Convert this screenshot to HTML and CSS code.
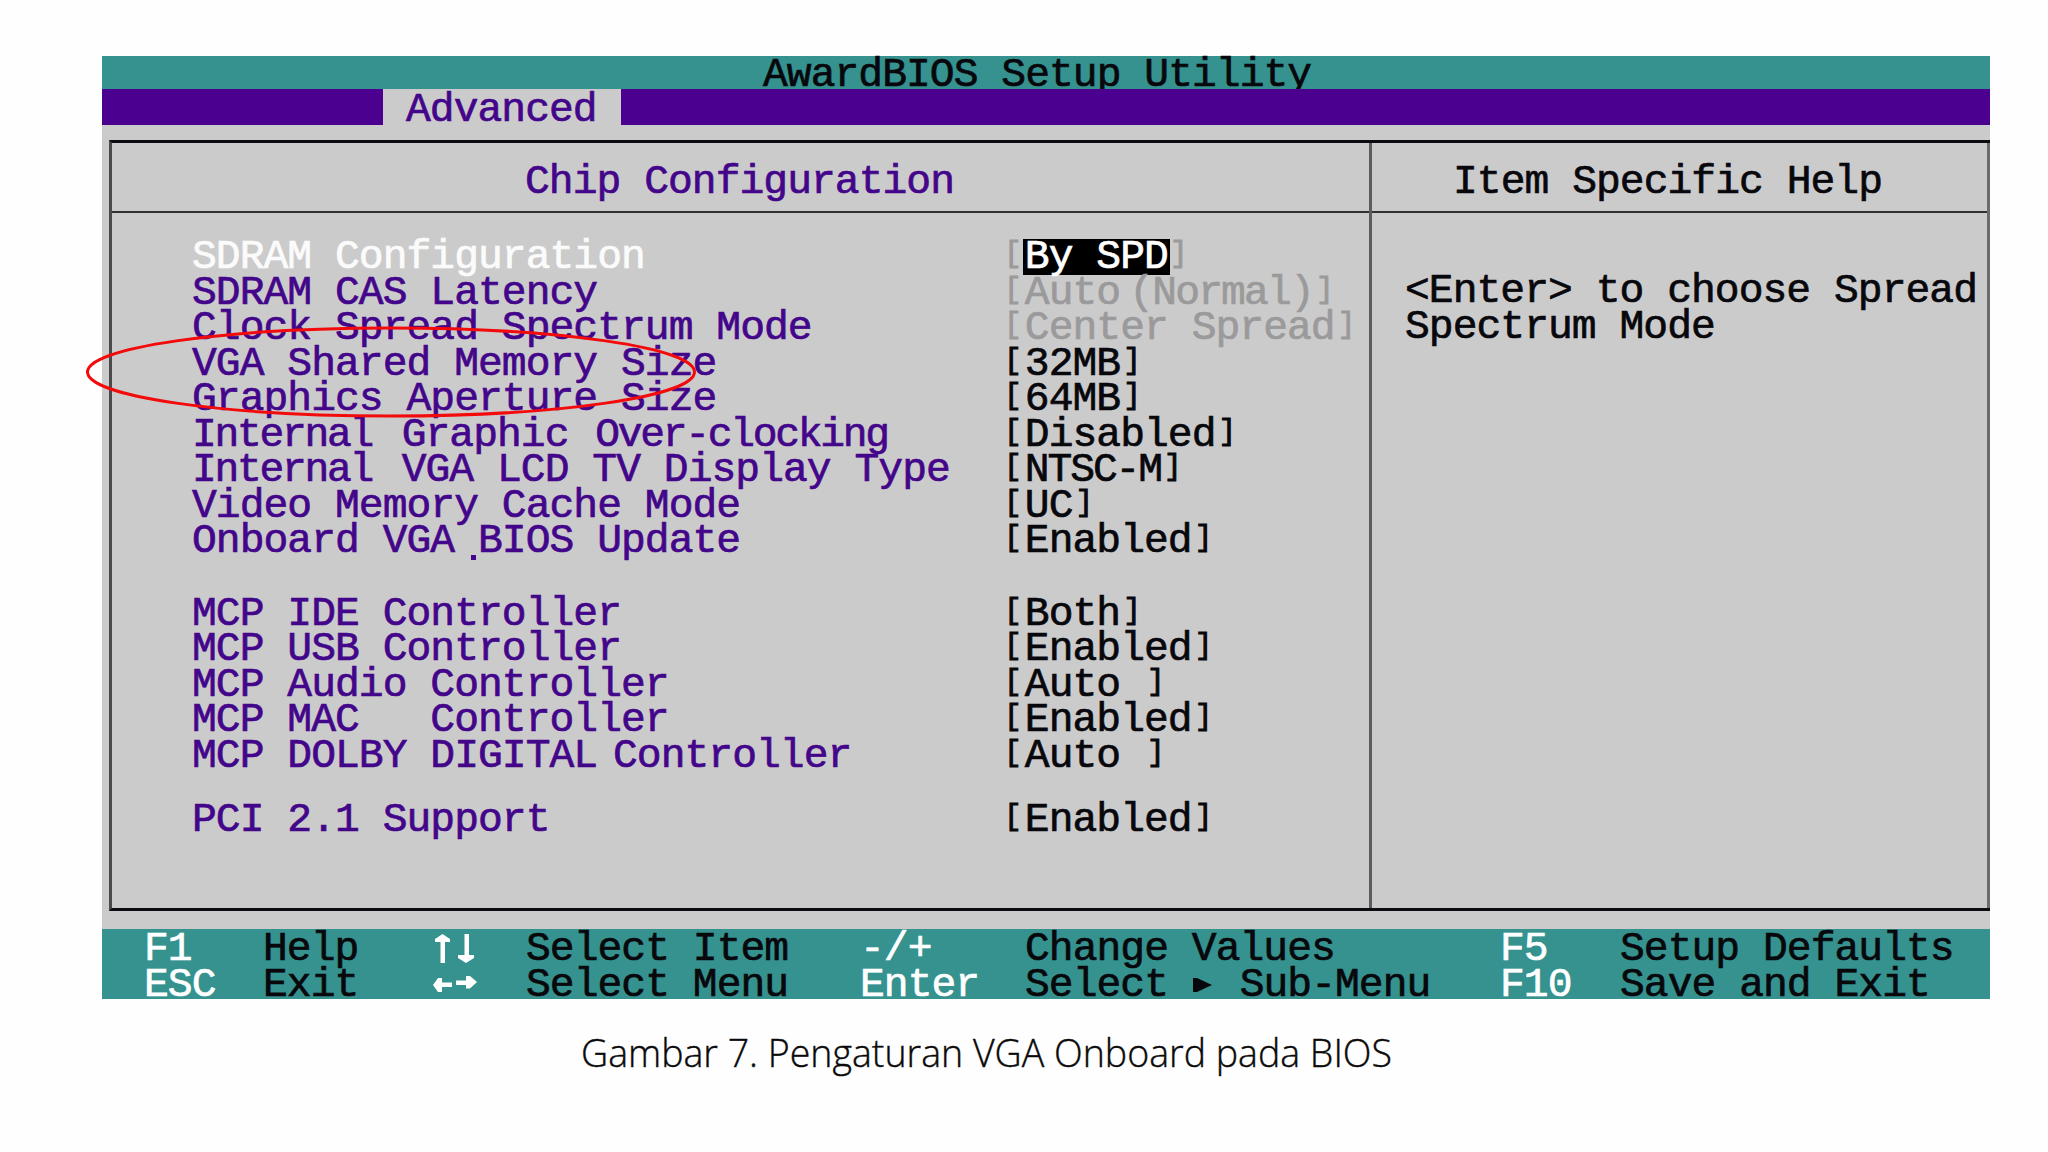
FILE: index.html
```html
<!DOCTYPE html>
<html lang="id">
<head>
<meta charset="utf-8">
<title>AwardBIOS Setup Utility</title>
<link rel="stylesheet" href="styles.css">
</head>
<body>
<figure class="slide">
  <main class="screen">
    <header class="title">AwardBIOS Setup Utility</header>
    <nav class="menu"><span class="tab">Advanced</span></nav>
    <div class="frame">
      <section class="pane options">
        <h1 class="heading">Chip Configuration</h1>
        <div class="group">
          <div class="row selected"><span>SDRAM Configuration</span><span class="dim"><i class="br">[</i><b class="cursor">By SPD</b><i class="br">]</i></span></div>
          <div class="row"><span>SDRAM CAS Latency</span><span class="dim"><i class="br">[</i>Auto<i class="normal">(Normal)</i><i class="br">]</i></span></div>
          <div class="row"><span>Clock Spread Spectrum Mode</span><span class="dim"><i class="br">[</i>Center Spread<i class="br">]</i></span></div>
          <div class="row"><span>VGA Shared Memory Size</span><span class="value"><i class="br">[</i>32MB<i class="br">]</i></span></div>
          <div class="row"><span>Graphics Aperture Size</span><span class="value"><i class="br">[</i>64MB<i class="br">]</i></span></div>
          <div class="row"><span><i class="internal">Internal</i> Graphic <i class="over">Over-clocking</i></span><span class="value"><i class="br">[</i>Disabled<i class="br">]</i></span></div>
          <div class="row"><span><i class="internal">Internal</i> VGA LCD TV Display Type</span><span class="value"><i class="br">[</i><i class="ntsc">NTSC-M</i><i class="br">]</i></span></div>
          <div class="row"><span>Video Memory Cache Mode</span><span class="value"><i class="br">[</i>UC<i class="br">]</i></span></div>
          <div class="row"><span>Onboard VGA <i class="speck"></i>BIOS Update</span><span class="value"><i class="br">[</i>Enabled<i class="br">]</i></span></div>
        </div>
        <div class="group mcp">
          <div class="row"><span>MCP IDE Controller</span><span class="value"><i class="br">[</i>Both<i class="br">]</i></span></div>
          <div class="row"><span>MCP USB Controller</span><span class="value"><i class="br">[</i>Enabled<i class="br">]</i></span></div>
          <div class="row"><span>MCP Audio Controller</span><span class="value"><i class="br">[</i>Auto <i class="br">]</i></span></div>
          <div class="row"><span>MCP MAC   Controller</span><span class="value"><i class="br">[</i>Enabled<i class="br">]</i></span></div>
          <div class="row"><span>MCP DOLBY DIGITAL<i class="near"> Controller</i></span><span class="value"><i class="br">[</i>Auto <i class="br">]</i></span></div>
        </div>
        <div class="group pci">
          <div class="row"><span>PCI 2.1 Support</span><span class="value"><i class="br">[</i>Enabled<i class="br">]</i></span></div>
        </div>
      </section>
      <aside class="pane help">
        <h2 class="heading">Item Specific Help</h2>
        <p class="tip">&lt;Enter&gt; to choose Spread
Spectrum Mode</p>
      </aside>
    </div>
    <footer class="keys">
      <span class="key">F1</span><span>Help</span>
      <svg class="arrows" viewBox="0 0 42 34"><path d="M5.500 31V10H0V7L7.500 2L15 7V10H10V31ZM29.500 2H34V23H39V26L31 31L23 26V23H29.500Z"/></svg>
      <span>Select Item</span><span class="key">-/+</span><span>Change Values</span><span class="key">F5</span><span>Setup Defaults</span>
      <span class="key">ESC</span><span>Exit</span>
      <svg class="arrows" viewBox="0 0 42 34"><path d="M-2 17L3 10H7V14.500H17V19H7V24H3ZM21 12.500H31V8H35L42 14L35 20.500H31V17H21Z"/></svg>
      <span>Select Menu</span><span class="key">Enter</span><span>Select <svg class="play" viewBox="0 0 24 24"><path d="M1 4H5L20 11L5 18H1Z"/></svg> Sub-Menu</span><span class="key">F10</span><span>Save and Exit</span>
    </footer>
    <svg class="mark" viewBox="0 0 612 92"><ellipse cx="306" cy="46" rx="303.500" ry="44"/></svg>
  </main>
  <figcaption class="caption"><span>Gambar 7. Pengaturan VGA Onboard pada BIOS</span></figcaption>
</figure>
</body>
</html>
```
FILE: styles.css
```css
* { box-sizing: border-box; }
body { margin: 0; background: #fefefe; }
.slide { margin: 0; padding: 56px 0 0 102px; height: 1152px; overflow: hidden; }

.screen {
  position: relative;
  display: flex;
  flex-direction: column;
  width: 1888px;
  height: 943px;
  background: #cccbcc;
  color: #08080c;
  font: 41.3px/35.5px "Liberation Mono", monospace;
  letter-spacing: -0.95px;
  -webkit-text-stroke: 0.7px currentColor;
}
.title, .tab, .heading, .tip, .row > span, .keys > span { white-space: pre; }
i, b { font-style: normal; font-weight: inherit; }

.title { height: 33px; padding-left: 661px; line-height: 38px; background: #35928f; }
.menu { height: 36px; padding-left: 281px; background: #4c008f; }
.tab { display: block; width: 238px; height: 37px; padding-left: 23px; line-height: 43px; background: #cccbcc; color: #43068a; }

.frame {
  display: flex;
  height: 771px;
  margin: 15px 0 18px 7px;
  border: solid #0c0c10;
  border-width: 3px 0 3px 0;
  border-left: 3px solid #4a4a4c;
}
.heading { margin: 0; height: 70px; padding-top: 21.500px; border-bottom: 2px solid #303032; font: inherit; }
.options { width: 1257px; color: #43068a; }
.options .heading { padding-left: 413px; }
.help { width: 621px; border-left: 3px solid #5c5c5e; border-right: 3px solid #6c6c6e; }
.help .heading { padding-left: 81px; }
.tip { margin: 0; padding: 61px 0 0 33px; }

.group { padding-left: 80px; }
.options .heading + .group { margin-top: 27px; }
.mcp { margin-top: 37px; }
.pci { margin-top: 29px; }
.row { display: grid; grid-template-columns: 809px 1fr; height: 35.5px; }
.selected { color: #fbfbfb; }
.value { color: #08080c; }
.dim { color: #9b9a9b; }
.br { display: inline-block; width: 23.85px; text-align: center; font-size: 29.5px; line-height: 1px; letter-spacing: 0; vertical-align: 6px; -webkit-text-stroke-width: 1px; }
.cursor { display: inline-block; height: 36px; margin: -1px -3px 0 -2px; width: 147px; padding-left: 2px; line-height: 37.5px; vertical-align: top; background: #000; color: #fff; }
.normal { margin-left: 9px; letter-spacing: -1.8px; }
.ntsc { letter-spacing: -2.1px; }
.internal { letter-spacing: -2.3px; margin-right: 6px; }
.over { letter-spacing: -2.3px; margin-left: 3px; }
.near { margin-left: -8px; }
.speck { position: relative; }
.speck::after { content: ""; position: absolute; left: -7px; bottom: 4px; width: 5px; height: 5px; background: #43068a; }

.keys {
  display: grid;
  grid-template-columns: 119px 172px 91px 334px 165px 475px 120px 1fr;
  grid-template-rows: 36px 34px;
  padding-left: 42px;
  padding-top: 3px;
  height: 70px;
  background: #35928f;
}
.key { color: #fff; }
.arrows { width: 42px; height: 34px; overflow: visible; fill: #fff; }
.play { width: 24px; height: 24px; vertical-align: -2px; fill: #08080c; }

.mark { position: absolute; left: -17px; top: 270px; width: 612px; height: 92px; fill: none; stroke: #f30a0a; stroke-width: 3; }

.caption { padding: 25px 0 0 479px; font: 300 39px/56px "Open Sans", sans-serif; color: #0a0a0a; white-space: nowrap; -webkit-text-stroke: 0.4px currentColor; }
.caption span { display: inline-block; transform: scaleX(0.962); transform-origin: left; }
```
